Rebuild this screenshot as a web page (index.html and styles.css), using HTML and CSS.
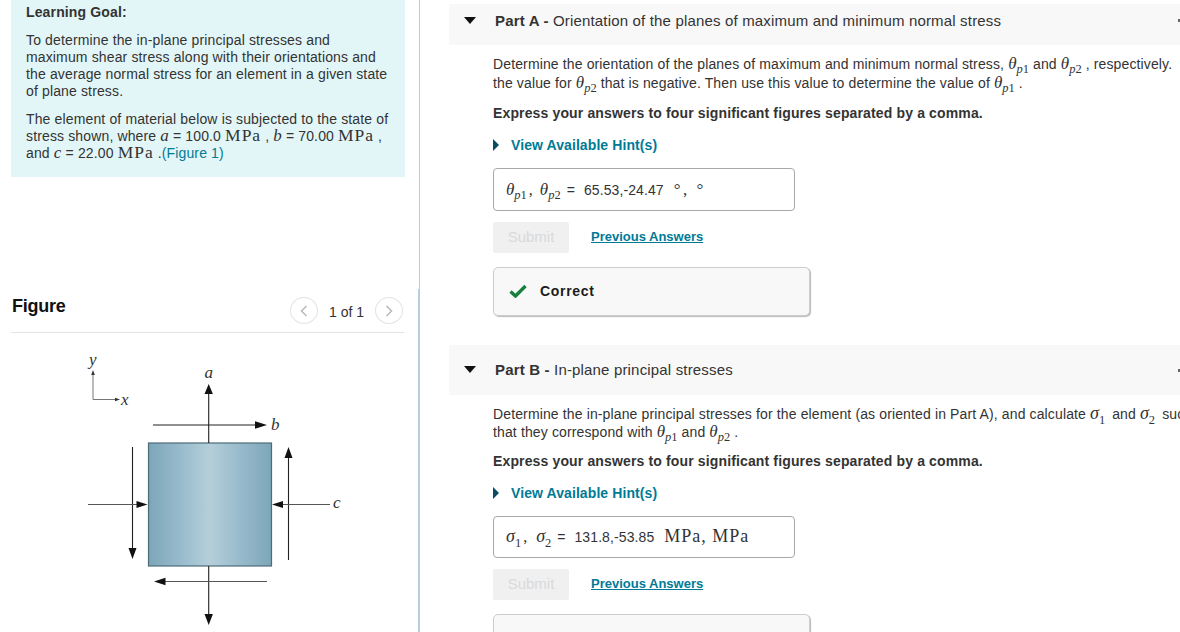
FILE: index.html
```html
<!DOCTYPE html>
<html lang="en">
<head>
<meta charset="utf-8">
<title>Principal stresses</title>
<link rel="stylesheet" href="styles.css">
</head>
<body>
<div class="page">
  <aside class="left">
    <section class="goal">
      <h2 class="goal-title">Learning Goal:</h2>
      <p>To determine the in-plane principal stresses and maximum shear stress along with their orientations and the average normal stress for an element in a given state of plane stress.</p>
      <p>The element of material below is subjected to the state of stress shown, where <i class="m">a</i> = 100.0 <span class="u">MPa</span> , <i class="m">b</i> = 70.00 <span class="u">MPa</span> , and <i class="m">c</i> = 22.00 <span class="u">MPa</span> .<a class="figlink">(Figure 1)</a></p>
    </section>
    <section class="figure">
      <div class="fig-head">
        <h2 class="fig-title">Figure</h2>
        <div class="pager">
          <span class="round"><svg width="8" height="12" viewBox="0 0 8 12"><path d="M6.500 1 1.500 6l5 5" fill="none" stroke="#bbb" stroke-width="1.600"/></svg></span>
          <span class="count">1 of 1</span>
          <span class="round"><svg width="8" height="12" viewBox="0 0 8 12"><path d="M1.500 1l5 5-5 5" fill="none" stroke="#bbb" stroke-width="1.600"/></svg></span>
        </div>
      </div>
      <svg class="diagram" width="393" height="299" viewBox="0 0 393 299">
        <defs>
          <linearGradient id="steel" x1="0" x2="1" y1="0" y2="0">
            <stop offset="0" stop-color="#7ca6b9"/>
            <stop offset=".25" stop-color="#97bacb"/>
            <stop offset=".5" stop-color="#b4cfda"/>
            <stop offset=".75" stop-color="#97bacb"/>
            <stop offset="1" stop-color="#7ca6b9"/>
          </linearGradient>
        </defs>
        <rect x="137.500" y="110" width="123" height="123" fill="url(#steel)" stroke="#4d6b78" stroke-width="1.200"/>
        <path d="M82 40v26.500h24" fill="none" stroke="#777" stroke-width="1"/>
        <path d="M82 37l-1.800 5h3.600zM109 66.500l-5-1.800v3.600z" fill="#333"/>
        <path d="M197.700 58v52M197.700 233v50M142 92h104M121.500 114v103M277.500 123v104" fill="none" stroke="#222" stroke-width="1.100"/>
        <path d="M77 171.500h50M271 171.500h48M153 248.500h103" fill="none" stroke="#555" stroke-width="1.200"/>
        <path d="M197.700 51l-4.200 10h8.400zM197.700 292l-4.200-11h8.400zM256 92l-12-3.800v7.600zM121.500 226l-4-11h8zM277.500 114l-4 11h8zM136.500 171.500l-11-3.600v7.200zM261 171.500l11-3.600v7.200zM143 248.500l11.500-3.800v7.600z" fill="#111"/>
        <g class="dlabel">
          <text x="78" y="32">y</text>
          <text x="110" y="72">x</text>
          <text x="193.500" y="45">a</text>
          <text x="260" y="97">b</text>
          <text x="322" y="175">c</text>
        </g>
      </svg>
    </section>
  </aside>
  <main class="right">
    <section class="part">
      <header class="part-head">
        <span class="caret"></span>
        <h3 class="part-title"><b>Part A -</b> Orientation of the planes of maximum and minimum normal stress</h3>
        <span class="corner"></span>
      </header>
      <div class="part-body">
        <p class="prompt">Determine the orientation of the planes of maximum and minimum normal stress, <span class="th">θ<sub>p<span class="up">1</span></sub></span> and <span class="th">θ<sub>p<span class="up">2</span></sub></span> , respectively.<br>the value for <span class="th">θ<sub>p<span class="up">2</span></sub></span> that is negative. Then use this value to determine the value of <span class="th">θ<sub>p<span class="up">1</span></sub></span> .</p>
        <p class="express">Express your answers to four significant figures separated by a comma.</p>
        <a class="hint"><span class="hint-caret"></span>View Available Hint(s)</a>
        <div class="answer">
          <span class="th">θ<sub>p<span class="up">1</span></sub></span><span class="sep">,</span><span class="th">θ<sub>p<span class="up">2</span></sub></span><span class="eq">=</span><span class="val">65.53,-24.47</span><span class="unit deg">°, °</span>
        </div>
        <div class="actions"><span class="submit">Submit</span><a class="prev">Previous Answers</a></div>
        <div class="feedback">
          <svg width="18" height="14" viewBox="0 0 18 14"><path d="M1.500 7.500 6.500 12 16.500 2" fill="none" stroke="#14803c" stroke-width="3.400"/></svg>
          <span>Correct</span>
        </div>
      </div>
    </section>
    <section class="part part-b">
      <header class="part-head tall">
        <span class="caret"></span>
        <h3 class="part-title"><b>Part B -</b> In-plane principal stresses</h3>
        <span class="corner"></span>
      </header>
      <div class="part-body">
        <p class="prompt two">Determine the in-plane principal stresses for the element (as oriented in Part A), and calculate <span class="th sg">σ<sub class="up">1</sub></span> and <span class="th sg">σ<sub class="up">2</sub></span> such<br>that they correspond with <span class="th">θ<sub>p<span class="up">1</span></sub></span> and <span class="th">θ<sub>p<span class="up">2</span></sub></span> .</p>
        <p class="express">Express your answers to four significant figures separated by a comma.</p>
        <a class="hint"><span class="hint-caret"></span>View Available Hint(s)</a>
        <div class="answer sigma">
          <span class="th sg">σ<sub class="up">1</sub></span><span class="sep">,</span><span class="th sg">σ<sub class="up">2</sub></span><span class="eq">=</span><span class="val">131.8,-53.85</span><span class="unit">MPa, MPa</span>
        </div>
        <div class="actions"><span class="submit">Submit</span><a class="prev">Previous Answers</a></div>
        <div class="feedback"></div>
      </div>
    </section>
  </main>
</div>
</body>
</html>
```
FILE: styles.css
```css
* { box-sizing: border-box; }
html, body { margin: 0; height: 632px; overflow: hidden; background: #fff; }
body { font-family: "Liberation Sans", Arial, sans-serif; color: #333; font-size: 14px; }
.page { display: grid; grid-template-columns: 420px 760px; width: 1180px; height: 632px; overflow: hidden; }
.left { padding-left: 11px; width: 420px; height: 632px; position: relative; border-right: 1px solid #b5cfe0; }
.left::after { content: ""; position: absolute; right: 0; top: 289px; bottom: 0; width: 1px; background: #b5cfe0; }
.goal { width: 394px; height: 177px; background: #e3f6f7; padding: 4px 15px 0; line-height: 17px; letter-spacing: .14px; }
.goal p { margin: 0 0 11px; }
.goal-title { margin: 0 0 11px; font-size: 14px; line-height: 17px; font-weight: 700; color: #333; }
.m { font-family: "Liberation Serif", serif; font-size: 17px; line-height: 0; }
.u { font-family: "Liberation Serif", serif; font-size: 17.500px; letter-spacing: 1px; line-height: 0; }
.figlink { color: #007a96; }
.figure { width: 393px; margin-top: 116px; }
.fig-head { display: flex; justify-content: space-between; align-items: center; height: 40px; border-bottom: 1px solid #dfe3e6; padding-bottom: 1px; }
.fig-title { margin: -12px 0 0 1px; font-size: 18px; font-weight: 700; color: #111; letter-spacing: -.25px; }
.pager { display: flex; align-items: center; gap: 11px; padding-bottom: 3px; margin-right: 1px; }
.count { font-size: 14px; padding-top: 2px; }
.round { width: 28px; height: 27px; border: 1px solid #e3e3e3; border-radius: 50%; display: flex; align-items: center; justify-content: center; }
.diagram { display: block; }
.dlabel { font-family: "Liberation Serif", serif; font-style: italic; font-size: 17px; fill: #333; }
.right { padding: 4px 0 0 29px; width: 760px; }
.part-head { display: flex; align-items: center; height: 41px; padding-bottom: 8px; background: #f8f8f8; }
.part-head.tall { height: 50px; padding-bottom: 0; }
.caret { width: 0; height: 0; border-left: 6px solid transparent; border-right: 6px solid transparent; border-top: 7px solid #111; margin: -1px 19px 0 15px; }
.part-title { margin: 0; font-size: 15px; font-weight: 400; color: #333; line-height: 18px; letter-spacing: .17px; }
.corner { margin-left: auto; width: 2px; height: 3px; background: #666; }
.part-body { padding-left: 44px; width: 731px; }
.prompt { margin: 0; padding-top: 10px; line-height: 19px; white-space: nowrap; letter-spacing: .13px; }
.prompt.two { padding-top: 10px; line-height: 18px; }
.th { font-family: "Liberation Serif", serif; font-style: italic; font-size: 17px; line-height: 0; letter-spacing: 0; }
.th.sg { font-size: 18px; }
.prompt .sg { margin-right: 3px; }
sub { font-size: 12.500px; line-height: 0; }
.up { font-style: normal; }
.express { margin: 11px 0 0; font-weight: 700; line-height: 18px; font-size: 14px; letter-spacing: .14px; }
.hint { display: flex; align-items: center; margin-top: 14px; line-height: 18px; font-weight: 700; color: #007a96; letter-spacing: .09px; }
.hint-caret { width: 0; height: 0; border-top: 6px solid transparent; border-bottom: 6px solid transparent; border-left: 6px solid #0a4b66; margin-right: 12px; }
.answer { display: flex; align-items: baseline; width: 302px; height: 43px; margin-top: 14px; padding: 11px 12px 0; border: 1px solid #a8a8a8; border-radius: 4px; }
.answer.sigma { height: 42px; padding-top: 9px; }
.sep { font-family: "Liberation Serif", serif; margin: 0 7px 0 2px; font-size: 16px; }
.sigma .sep { margin-right: 9px; }
.eq { margin: 0 9px 0 6px; }
.val { margin-right: 10px; letter-spacing: .1px; }
.unit { font-family: "Liberation Serif", serif; font-size: 18px; letter-spacing: 1px; }
.unit.deg { font-size: 17px; letter-spacing: 2.500px; }
.actions { display: flex; align-items: center; margin-top: 11px; height: 31px; }
.submit { width: 76px; height: 31px; background: #f0f0f0; color: #d9d9d9; border-radius: 2px; text-align: center; line-height: 29px; font-size: 15px; }
.prev { margin: -2px 0 0 22px; font-size: 13px; font-weight: 700; color: #007a96; text-decoration: underline; }
.feedback { display: flex; align-items: center; gap: 13px; width: 317px; height: 49px; margin-top: 14px; padding: 0 0 2px 15px; background: #f8f8f8; border: 1px solid #ccc; border-radius: 5px; box-shadow: 1px 1px 1px #bbb; font-weight: 700; color: #1c1c1c; letter-spacing: .7px; }
.part-b { margin-top: 29px; }
```
